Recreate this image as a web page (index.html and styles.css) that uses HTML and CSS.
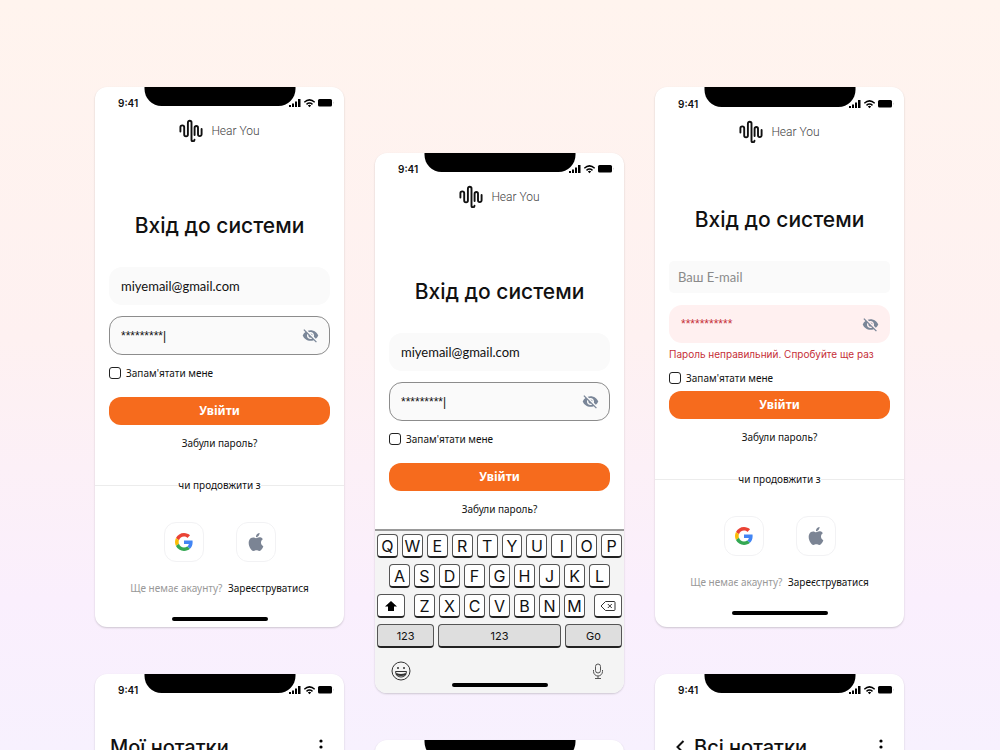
FILE: index.html
```html
<!DOCTYPE html>
<html lang="uk">
<head>
    <meta charset="UTF-8">
    <meta name="viewport" content="width=device-width, initial-scale=1.0">
    <title>Hear You</title>
    <link rel="stylesheet" href="styles.css">
</head>
<body>
    <!-- Іконки -->
    <svg class="sprite" aria-hidden="true">
        <symbol id="logo" viewBox="0 0 24 24">
            <g fill="none" stroke="#111" stroke-width="1.900" stroke-linecap="round">
                <path d="M1.400 12.500V8.300a1.900 1.900 0 0 1 3.800 0V15.500a1.850 1.850 0 0 0 3.700 0V3.500a1.800 1.800 0 0 1 3.600 0V20.500a1.500 1.500 0 0 0 3 .3"/>
                <path d="M15.600 16V8.700a1.700 1.700 0 0 1 3.400 0V15.300a1.800 1.800 0 0 0 3.600 0V10"/>
            </g>
        </symbol>
        <symbol id="signals" viewBox="0 0 46 10">
            <path d="M1 7h2v2H1zM4 5.500h2V9H4zM7 3.500h2V9H7zM10 1h2.500v8H10z"/>
            <path d="M16.300 4.200q5.200-4.700 10.400 0M18.500 6.300q3-2.500 6 0" fill="none" stroke="#000" stroke-width="1.500"/>
            <path d="M19.800 7.500q1.700-1.300 3.400 0L21.500 9.300z"/>
            <rect x="30" y="1" width="14" height="7.500" rx="1.500"/>
            <path d="M45 3.500v2.500q1-1.200 0-2.500z" fill="#999"/>
        </symbol>
        <symbol id="eye-off" viewBox="0 0 24 24">
            <path fill="#7a8698" d="M12 7c2.760 0 5 2.240 5 5 0 .65-.13 1.260-.36 1.830l2.920 2.920c1.510-1.260 2.700-2.890 3.430-4.750-1.730-4.390-6-7.500-11-7.500-1.400 0-2.740.25-3.980.7l2.160 2.160C10.740 7.130 11.350 7 12 7zM2 4.270l2.280 2.280.46.46C3.080 8.300 1.780 10.020 1 12c1.730 4.390 6 7.500 11 7.500 1.550 0 3.030-.3 4.380-.84l.42.42L19.730 22 21 20.730 3.270 3 2 4.270zM7.530 9.800l1.550 1.550c-.05.21-.08.43-.08.65 0 1.660 1.340 3 3 3 .22 0 .44-.03.65-.08l1.550 1.550c-.67.33-1.410.53-2.200.53-2.760 0-5-2.240-5-5 0-.79.2-1.530.53-2.200zm4.310-.78l3.150 3.150.02-.16c0-1.660-1.340-3-3-3l-.17.01z"/>
        </symbol>
        <symbol id="google" viewBox="0 0 48 48">
            <path fill="#ea4335" d="M24 9.500c3.540 0 6.710 1.220 9.210 3.600l6.850-6.850C35.900 2.380 30.470 0 24 0 14.620 0 6.510 5.380 2.560 13.220l7.980 6.190C12.430 13.720 17.740 9.500 24 9.500z"/>
            <path fill="#4285f4" d="M46.980 24.550c0-1.570-.15-3.090-.38-4.550H24v9.020h12.940c-.58 2.960-2.260 5.480-4.780 7.180l7.730 6c4.510-4.180 7.090-10.360 7.090-17.650z"/>
            <path fill="#fbbc05" d="M10.530 28.590c-.48-1.450-.76-2.990-.76-4.590s.27-3.140.76-4.590l-7.980-6.190C.92 16.460 0 20.120 0 24c0 3.880.92 7.540 2.560 10.780l7.970-6.190z"/>
            <path fill="#34a853" d="M24 48c6.480 0 11.930-2.130 15.890-5.810l-7.730-6c-2.150 1.450-4.920 2.300-8.160 2.300-6.260 0-11.570-4.220-13.470-9.910l-7.980 6.190C6.510 42.620 14.620 48 24 48z"/>
        </symbol>
        <symbol id="apple" viewBox="0 0 24 24">
            <path fill="#7b8494" d="M12.150 6.900c-.95 0-2.420-1.080-3.960-1.040-2.040.03-3.910 1.180-4.960 3.010-2.120 3.680-.55 9.100 1.520 12.090 1.010 1.450 2.210 3.090 3.790 3.040 1.520-.07 2.090-.99 3.940-.99 1.830 0 2.350.99 3.960.95 1.640-.03 2.680-1.480 3.680-2.950 1.160-1.690 1.640-3.320 1.660-3.410-.04-.01-3.180-1.220-3.220-4.850-.03-3.040 2.480-4.490 2.600-4.560-1.430-2.090-3.620-2.320-4.390-2.380-2-.16-3.680 1.090-4.620 1.090zM15.530 3.830c.84-1.010 1.400-2.430 1.250-3.830-1.210.05-2.660.8-3.530 1.820-.78.9-1.460 2.330-1.270 3.710 1.340.1 2.720-.69 3.550-1.700"/>
        </symbol>
        <symbol id="dots" viewBox="0 0 4 16">
            <circle cx="2" cy="2" r="1.600"/>
            <circle cx="2" cy="8" r="1.600"/>
            <circle cx="2" cy="14" r="1.600"/>
        </symbol>
    </svg>

    <main class="board">
        <div class="column">
            <!-- Вхід: заповнена форма -->
            <section class="phone">
                <div class="status-bar">
                    <span>9:41</span>
                    <div class="notch"></div>
                    <svg class="signals"><use href="#signals"/></svg>
                </div>
                <div class="brand">
                    <svg><use href="#logo"/></svg>
                    <span>Hear You</span>
                </div>
                <h1>Вхід до системи</h1>
                <form class="form">
                    <input class="field" type="text" aria-label="E-mail" value="miyemail@gmail.com">
                    <div class="password active">
                        <input type="text" aria-label="Пароль" value="*********|">
                        <button type="button" class="eye" aria-label="Показати пароль"><svg><use href="#eye-off"/></svg></button>
                    </div>
                    <label class="remember"><input type="checkbox"> Запам'ятати мене</label>
                    <button type="button" class="btn">Увійти</button>
                    <a class="forgot" href="#">Забули пароль?</a>
                </form>
                <div class="divider"><span>чи продовжити з</span></div>
                <div class="socials">
                    <button type="button" aria-label="Google"><svg><use href="#google"/></svg></button>
                    <button type="button" aria-label="Apple"><svg><use href="#apple"/></svg></button>
                </div>
                <p class="signup">Ще немає акаунту? <a href="#">Зареєструватися</a></p>
                <div class="home-bar"></div>
            </section>

            <section class="phone">
                <div class="status-bar">
                    <span>9:41</span>
                    <div class="notch"></div>
                    <svg class="signals"><use href="#signals"/></svg>
                </div>
                <div class="notes-header">
                    <h2>Мої нотатки</h2>
                    <button type="button" class="more" aria-label="Меню"><svg><use href="#dots"/></svg></button>
                </div>
            </section>
        </div>

        <div class="column lower">
            <!-- Вхід: відкрита клавіатура -->
            <section class="phone">
                <div class="status-bar">
                    <span>9:41</span>
                    <div class="notch"></div>
                    <svg class="signals"><use href="#signals"/></svg>
                </div>
                <div class="brand">
                    <svg><use href="#logo"/></svg>
                    <span>Hear You</span>
                </div>
                <h1>Вхід до системи</h1>
                <form class="form">
                    <input class="field" type="text" aria-label="E-mail" value="miyemail@gmail.com">
                    <div class="password active">
                        <input type="text" aria-label="Пароль" value="*********|">
                        <button type="button" class="eye" aria-label="Показати пароль"><svg><use href="#eye-off"/></svg></button>
                    </div>
                    <label class="remember"><input type="checkbox"> Запам'ятати мене</label>
                    <button type="button" class="btn">Увійти</button>
                    <a class="forgot" href="#">Забули пароль?</a>
                </form>
                <div class="keyboard">
                    <div class="keys">
                        <button>Q</button><button>W</button><button>E</button><button>R</button><button>T</button><button>Y</button><button>U</button><button>I</button><button>O</button><button>P</button>
                    </div>
                    <div class="keys middle">
                        <button>A</button><button>S</button><button>D</button><button>F</button><button>G</button><button>H</button><button>J</button><button>K</button><button>L</button>
                    </div>
                    <div class="keys">
                        <button class="side" aria-label="Shift"><svg viewBox="0 0 14 12"><path d="M7 1l6 5.500h-3V11H4V6.500H1z"/></svg></button>
                        <div class="keys letters">
                            <button>Z</button><button>X</button><button>C</button><button>V</button><button>B</button><button>N</button><button>M</button>
                        </div>
                        <button class="side" aria-label="Видалити"><svg viewBox="0 0 16 12"><path d="M5.500 1.500H14q1 0 1 1v7q0 1-1 1H5.500L1 6zM7.800 4l4 4M11.800 4l-4 4" fill="none" stroke="#333"/></svg></button>
                    </div>
                    <div class="keys wide">
                        <button>123</button><button class="space">123</button><button>Go</button>
                    </div>
                    <div class="tools">
                        <svg viewBox="0 0 20 20" fill="none" stroke="#333">
                            <circle cx="10" cy="10" r="9"/>
                            <path d="M4.500 10.500h11q-.5 5.500-5.500 5.500t-5.500-5.500z"/>
                            <path d="M5 13q5 2 10 0" stroke-width="2"/>
                            <path d="M7 6v2M13 6v2" stroke-width="1.500"/>
                        </svg>
                        <svg viewBox="0 0 20 20" fill="none" stroke="#555">
                            <rect x="7.500" y="3" width="5" height="9" rx="2.500"/>
                            <path d="M5.500 9v1.500a4.500 4.500 0 0 0 9 0V9M10 15v2.500M7 17.500h6"/>
                        </svg>
                    </div>
                    <div class="home-bar"></div>
                </div>
            </section>

            <section class="phone">
                <div class="status-bar">
                    <span>9:41</span>
                    <div class="notch"></div>
                    <svg class="signals"><use href="#signals"/></svg>
                </div>
            </section>
        </div>

        <div class="column">
            <!-- Вхід: неправильний пароль -->
            <section class="phone has-error">
                <div class="status-bar">
                    <span>9:41</span>
                    <div class="notch"></div>
                    <svg class="signals"><use href="#signals"/></svg>
                </div>
                <div class="brand">
                    <svg><use href="#logo"/></svg>
                    <span>Hear You</span>
                </div>
                <h1>Вхід до системи</h1>
                <form class="form">
                    <input class="field" type="text" aria-label="E-mail" placeholder="Ваш E-mail">
                    <div class="password">
                        <input type="text" aria-label="Пароль" value="***********">
                        <button type="button" class="eye" aria-label="Показати пароль"><svg><use href="#eye-off"/></svg></button>
                    </div>
                    <p class="error">Пароль неправильний. Спробуйте ще раз</p>
                    <label class="remember"><input type="checkbox"> Запам'ятати мене</label>
                    <button type="button" class="btn">Увійти</button>
                    <a class="forgot" href="#">Забули пароль?</a>
                </form>
                <div class="divider"><span>чи продовжити з</span></div>
                <div class="socials">
                    <button type="button" aria-label="Google"><svg><use href="#google"/></svg></button>
                    <button type="button" aria-label="Apple"><svg><use href="#apple"/></svg></button>
                </div>
                <p class="signup">Ще немає акаунту? <a href="#">Зареєструватися</a></p>
                <div class="home-bar"></div>
            </section>

            <section class="phone">
                <div class="status-bar">
                    <span>9:41</span>
                    <div class="notch"></div>
                    <svg class="signals"><use href="#signals"/></svg>
                </div>
                <div class="notes-header">
                    <button type="button" class="back" aria-label="Назад"><svg viewBox="0 0 10 16"><path d="M8.500 2L2.500 8l6 6" fill="none" stroke="#111" stroke-width="2"/></svg></button>
                    <h2>Всі нотатки</h2>
                    <button type="button" class="more" aria-label="Меню"><svg><use href="#dots"/></svg></button>
                </div>
            </section>
        </div>
    </main>
</body>
</html>
```
FILE: styles.css
```css
* {
    margin: 0;
    padding: 0;
    box-sizing: border-box;
}

body {
    height: 100vh;
    overflow: hidden;
    background: linear-gradient(to bottom, #fff4ee 0%, #fef1f1 45%, #faeffd 80%, #f7f1fe 100%);
    font-family: "Noto Sans", sans-serif;
    font-size: 10px;
    line-height: 16px;
    color: #111;
}

button {
    font: inherit;
    color: inherit;
    background: none;
    border: none;
    cursor: pointer;
}

input {
    font: inherit;
    color: inherit;
    border: none;
    outline: none;
    background: none;
}

a {
    color: inherit;
    text-decoration: none;
}

svg {
    display: block;
}

.sprite {
    position: absolute;
    width: 0;
    height: 0;
}

.board {
    display: grid;
    grid-template-columns: repeat(3, 1fr);
    gap: 31px;
    padding: 87px 96px 0 95px;
}

.column {
    display: flex;
    flex-direction: column;
    gap: 47px;
}

.column.lower {
    padding-top: 66px;
}

.phone {
    display: flex;
    flex-direction: column;
    min-height: 540px;
    background: #fff;
    border-radius: 12px;
    box-shadow: 0 1px 2px rgba(0, 0, 0, 0.18);
    overflow: hidden;
}

/* Верхня панель */
.status-bar {
    position: relative;
    display: flex;
    justify-content: space-between;
    align-items: center;
    padding: 8px 10px 8px 23px;
    font-family: Inter, sans-serif;
    font-size: 10px;
    font-weight: 600;
}

.notch {
    position: absolute;
    top: 0;
    left: 50%;
    width: 151px;
    height: 19px;
    transform: translateX(-50%);
    background: #000;
    border-radius: 0 0 17px 17px;
}

.signals {
    width: 46px;
    height: 10px;
}

.brand {
    display: flex;
    justify-content: center;
    align-items: center;
    gap: 8px;
    font-family: Roboto, sans-serif;
    font-size: 12px;
    font-weight: 300;
    color: #444;
}

.brand svg {
    width: 24px;
    height: 24px;
}

h1,
h2 {
    font-family: Inter, sans-serif;
    font-size: 20px;
    font-weight: 500;
    line-height: 28px;
}

h1 {
    margin-top: 69px;
    font-size: 21px;
    text-align: center;
}

/* Форма */
.form {
    display: flex;
    flex-direction: column;
    padding: 27px 14px 0;
}

.field {
    width: 100%;
    height: 38px;
    padding: 0 12px;
    background: #fafafa;
    border-radius: 13px;
    font-family: Lato, sans-serif;
    font-size: 13px;
}

.field::placeholder {
    color: #8a8a8a;
}

.password {
    display: flex;
    align-items: center;
    height: 39px;
    margin-top: 11px;
    padding: 0 10px 0 11px;
    background: #fafafa;
    border: 1px solid transparent;
    border-radius: 13px;
}

.password.active {
    border-color: #8c8c8c;
}

.password input {
    flex: 1;
    min-width: 0;
    font-family: "Liberation Sans", sans-serif;
    font-size: 12px;
}

.eye svg {
    width: 17px;
    height: 17px;
}

.remember {
    display: flex;
    align-items: center;
    gap: 5px;
    margin-top: 10px;
}

.remember input {
    appearance: none;
    width: 12px;
    height: 12px;
    border: 1px solid #222;
    border-radius: 3px;
}

.btn {
    height: 28px;
    margin-top: 16px;
    background: #f66b1d;
    border-radius: 12px;
    color: #fff;
    font-size: 12px;
    font-weight: 700;
}

.forgot {
    margin-top: 10px;
    text-align: center;
}

.divider {
    display: flex;
    align-items: center;
    margin-top: 26px;
}

.divider::before,
.divider::after {
    content: "";
    flex: 1;
    height: 1px;
    background: #ececec;
}

.socials {
    display: flex;
    justify-content: center;
    gap: 32px;
    margin-top: 29px;
}

.socials button {
    display: flex;
    justify-content: center;
    align-items: center;
    width: 40px;
    height: 40px;
    border: 1px solid #f2f2f4;
    border-radius: 12px;
}

.socials svg {
    width: 18px;
    height: 18px;
}

.signup {
    margin-top: 18px;
    text-align: center;
    color: #999;
}

.signup a {
    margin-left: 3px;
    color: #111;
}

.home-bar {
    width: 96px;
    height: 4px;
    margin: 21px auto 0;
    background: #000;
    border-radius: 2px;
}

/* Неправильний пароль */
.has-error .status-bar {
    padding: 9px 10px 8px 23px;
}

.has-error .notch {
    height: 20px;
}

.has-error h1 {
    margin-top: 62px;
}

.has-error .field {
    height: 32px;
    padding: 0 9px;
    border-radius: 5px;
}

.has-error .password {
    height: 38px;
    margin-top: 12px;
    background: #fff0f0;
}

.has-error .password input {
    color: #c62f38;
}

.error {
    margin-top: 3px;
    font-family: Inter, sans-serif;
    color: #c62f38;
}

.has-error .remember {
    margin-top: 8px;
}

.has-error .btn {
    margin-top: 5px;
}

/* Клавіатура */
.keyboard {
    display: flex;
    flex-direction: column;
    flex: 1;
    gap: 6px;
    margin-top: 12px;
    padding: 3px 2px 0;
    background: #f4f4f4;
    border-top: 2px solid #999;
    font-family: Inter, sans-serif;
}

.keys {
    display: flex;
    gap: 4px;
}

.keys.middle {
    padding: 0 12px;
}

.keys.letters {
    flex: 1;
    padding: 0 5px;
}

.keys button {
    display: flex;
    justify-content: center;
    align-items: center;
    flex: 1;
    height: 24px;
    background: #fff;
    border: 1px solid #555;
    border-bottom: 2px solid #222;
    border-radius: 4px;
    font-size: 16px;
}

.keys .side {
    flex: 0 0 28px;
}

.side svg {
    width: 16px;
    height: 12px;
}

.keys.wide button {
    background: #dedede;
    font-size: 11px;
}

.keys.wide .space {
    flex: 0 0 50%;
}

.tools {
    display: flex;
    justify-content: space-between;
    margin-top: 7px;
    padding: 0 14px;
}

.tools svg {
    width: 20px;
    height: 20px;
}

.keyboard .home-bar {
    margin-top: -4px;
}

/* Нотатки */
.notes-header {
    display: flex;
    align-items: center;
    margin-top: 27px;
    padding: 0 21px 0 15px;
}

.notes-header h2 {
    flex: 1;
}

.more svg {
    width: 4px;
    height: 16px;
}

.back {
    margin: 0 9px 0 5px;
}

.back svg {
    width: 10px;
    height: 16px;
}
```
